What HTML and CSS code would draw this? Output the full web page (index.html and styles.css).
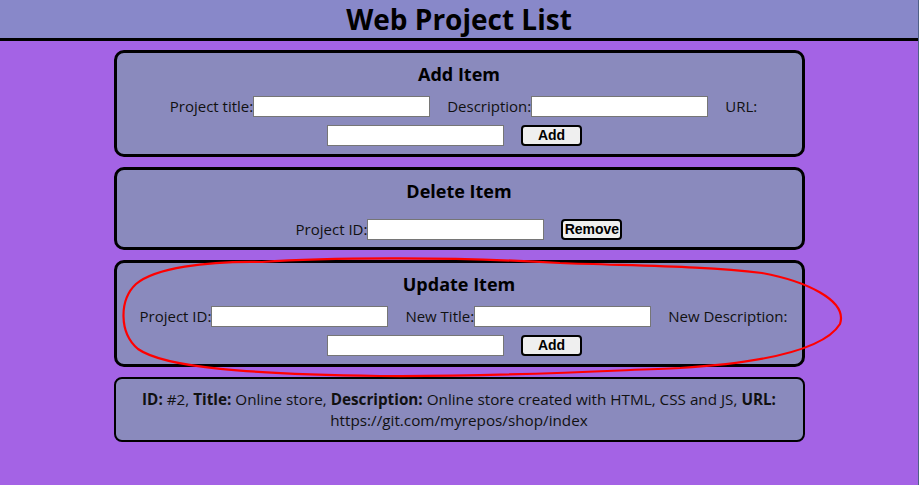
FILE: index.html
```html
<!DOCTYPE html>
<html lang="en">
<head>
<meta charset="utf-8">
<title>Web Project List</title>
<link rel="stylesheet" href="styles.css">
</head>
<body>
<header class="top">
  <h1 class="top-title">Web Project List</h1>
</header>
<main class="list">
  <section class="card">
    <h2 class="card-title">Add Item</h2>
    <form class="fields">
      <label class="field-label">Project title:</label><input class="field-input" type="text">
      <label class="field-label">Description:</label><input class="field-input" type="text">
      <label class="field-label">URL:</label><input class="field-input" type="text">
      <button class="btn" type="button">Add</button>
    </form>
  </section>
  <section class="card">
    <h2 class="card-title">Delete Item</h2>
    <form class="fields fields-single">
      <label class="field-label">Project ID:</label><input class="field-input" type="text">
      <button class="btn" type="button">Remove</button>
    </form>
  </section>
  <section class="card">
    <h2 class="card-title">Update Item</h2>
    <form class="fields">
      <label class="field-label">Project ID:</label><input class="field-input" type="text">
      <label class="field-label">New Title:</label><input class="field-input" type="text">
      <label class="field-label">New Description:</label><input class="field-input" type="text">
      <button class="btn" type="button">Add</button>
    </form>
  </section>
  <section class="card card-result">
    <p class="result-text"><b>ID:</b> #2, <b>Title:</b> Online store, <b>Description:</b> Online store created with HTML, CSS and JS, <b>URL:</b> https://git.com/myrepos/shop/index</p>
  </section>
</main>
<svg class="annotation" width="919" height="485" viewBox="0 0 919 485" aria-hidden="true">
  <path d="M 262 262 C 205 261, 155 268, 136 284 C 119 300, 119 333, 138 349 C 165 368, 250 374, 380 376 C 500 377, 600 371, 680 368 C 760 363, 824 350, 840 324 C 848 300, 805 281, 762 273 C 705 266, 640 266, 560 263 C 460 257, 330 257, 262 262" fill="none" stroke="#ff0000" stroke-width="2.2" stroke-linecap="round"/>
</svg>
</body>
</html>
```

FILE: styles.css
```css
* {
  box-sizing: border-box;
}

html, body {
  margin: 0;
  padding: 0;
}

body {
  position: relative;
  width: 919px;
  min-height: 485px;
  background: #a463e5;
  border-right: 1px solid #4d6186;
  font-family: "Open Sans", "Noto Sans", sans-serif;
  color: #111;
  overflow: hidden;
}

.top {
  height: 41px;
  background: #8888c9;
  border-bottom: 3px solid #000;
}

.top-title {
  margin: 0;
  text-align: center;
  font-size: 28px;
  font-weight: 700;
  line-height: 38px;
  color: #000;
}

.list {
  display: flex;
  flex-direction: column;
  align-items: center;
  gap: 10px;
  padding-top: 9px;
}

.card {
  width: 691px;
  background: #8a8abd;
  border: 3px solid #000;
  border-radius: 10px;
  padding: 0 8px 8px;
}

.card-title {
  margin: 10px 0 0;
  text-align: center;
  font-size: 18px;
  font-weight: 700;
  line-height: 22px;
  color: #000;
}

.fields {
  margin-top: 11px;
  display: flex;
  flex-wrap: wrap;
  justify-content: center;
  align-items: center;
  row-gap: 8px;
}

.fields-single {
  margin-top: 17px;
  margin-bottom: -1px;
}

.field-label {
  margin-left: 9px;
  font-size: 15px;
  line-height: 21px;
  white-space: nowrap;
}

.field-input {
  width: 177px;
  height: 21px;
  margin: 0 8px 0 0;
  padding: 0 2px;
  background: #fff;
  border: 1px solid #767676;
  border-radius: 0;
  font-size: 13px;
}

.btn {
  width: 61px;
  height: 21px;
  margin: 0 9px;
  padding: 0;
  background: #efefef;
  border: 2px solid #000;
  border-radius: 4px;
  font-family: "Liberation Sans", Arial, sans-serif;
  font-size: 14px;
  font-weight: 700;
  line-height: 17px;
  color: #000;
  white-space: nowrap;
  overflow: visible;
}

.card-result {
  border-width: 2px;
  border-radius: 8px;
  padding: 10px 10px 9px;
}

.result-text {
  margin: 0;
  text-align: center;
  font-size: 15.25px;
  line-height: 21px;
}

.result-text b {
  font-weight: 700;
}

.annotation {
  position: absolute;
  top: 0;
  left: 0;
  pointer-events: none;
}
```
